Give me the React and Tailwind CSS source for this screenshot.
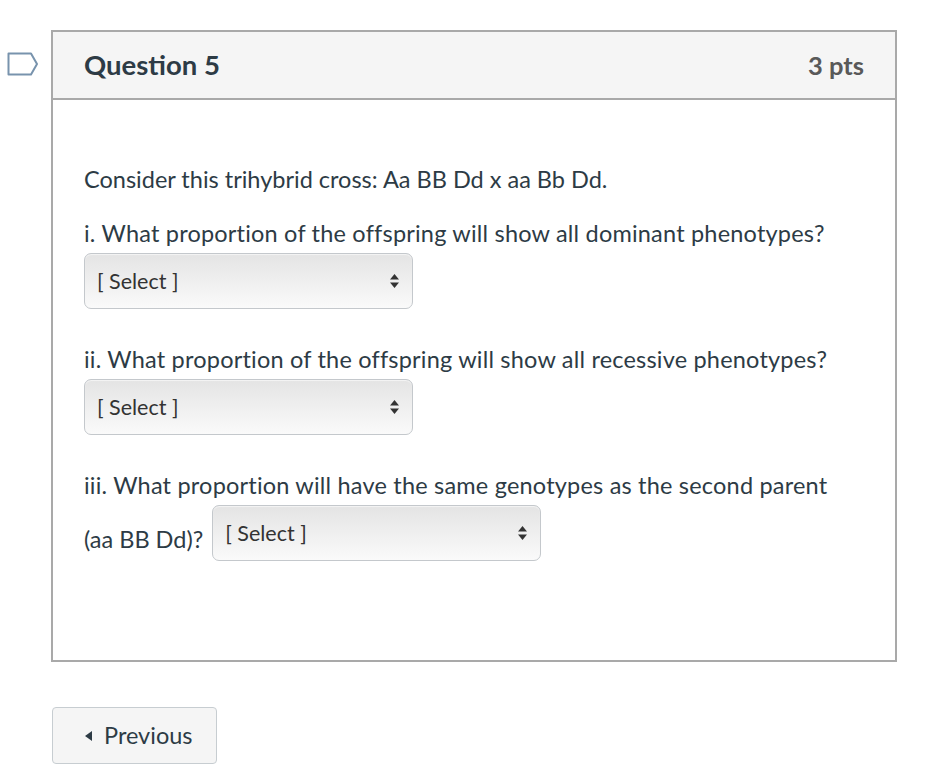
import React from 'react';

function SelectBox({ className = '' }) {
  return (
    <div
      className={`flex h-[56px] w-[329px] items-center justify-between rounded-[7px] border border-[#c4c8cc] bg-gradient-to-b from-[#e4e4e4] to-[#fafafa] pl-[12px] pr-[12px] shadow-[inset_0_1px_1px_rgba(255,255,255,0.6)] ${className}`}
    >
      <span className="text-[21.5px] leading-[30px] text-[#333]">[ Select ]</span>
      <svg width="9" height="14" viewBox="0 0 9 14" className="mr-[1px]">
        <path d="M4.5 0 L9 5.5 L0 5.5 Z" fill="#333" />
        <path d="M0 8.5 L9 8.5 L4.5 14 Z" fill="#333" />
      </svg>
    </div>
  );
}

export default function App() {
  return (
    <div className="min-h-[766px] w-[936px] bg-white pt-[30px] font-['Lato',sans-serif] text-[#2d3b45]">
      <div className="flex">
        <div className="w-[51px] shrink-0 pt-[22px] pl-[7px]">
          <svg width="32" height="24" viewBox="0 0 32 24">
            <path
              d="M1.5 1.5 H24 L30 12 L24 22.5 H1.5 Z"
              fill="none"
              stroke="#7893ad"
              strokeWidth="2"
              strokeLinejoin="round"
            />
          </svg>
        </div>

        <div className="w-[846px] border-2 border-[#a9a9a9]">
          {/* header */}
          <div className="flex h-[68px] items-center justify-between border-b-2 border-[#a9a9a9] bg-[#f5f5f5] pl-[31px] pr-[31px]">
            <h2 className="text-[27.5px] font-bold">Question 5</h2>
            <span className="text-[25.5px] font-bold text-[#595959]">3 pts</span>
          </div>

          {/* body */}
          <div className="pl-[31px] pt-[64px] pb-[99px] text-[23.5px] leading-[30px]">
            <p>Consider this trihybrid cross: Aa BB Dd x aa Bb Dd.</p>
            <p className="mt-[24px] tracking-[0.2px]">i. What proportion of the offspring will show all dominant phenotypes?</p>
            <SelectBox className="mt-[5px]" />
            <p className="mt-[35px] tracking-[0.2px]">ii. What proportion of the offspring will show all recessive phenotypes?</p>
            <SelectBox className="mt-[5px]" />
            <p className="mt-[35px] tracking-[0.2px]">iii. What proportion will have the same genotypes as the second parent</p>
            <div className="mt-[5px] flex items-center gap-[9px]">
              <span className="pt-[12px]">(aa BB Dd)?</span>
              <SelectBox />
            </div>
          </div>
        </div>
      </div>

      <div className="mt-[45px] pl-[52px]">
        <button className="flex h-[57px] w-[165px] items-center gap-[12px] rounded-[4px] border border-[#c7cdd1] bg-[#f5f5f5] pl-[32px] text-[23.5px] text-[#2d3b45]">
          <svg width="7" height="10" viewBox="0 0 7 10">
            <path d="M7 0 L7 10 L0 5 Z" fill="#2d3b45" />
          </svg>
          <span>Previous</span>
        </button>
      </div>
    </div>
  );
}
